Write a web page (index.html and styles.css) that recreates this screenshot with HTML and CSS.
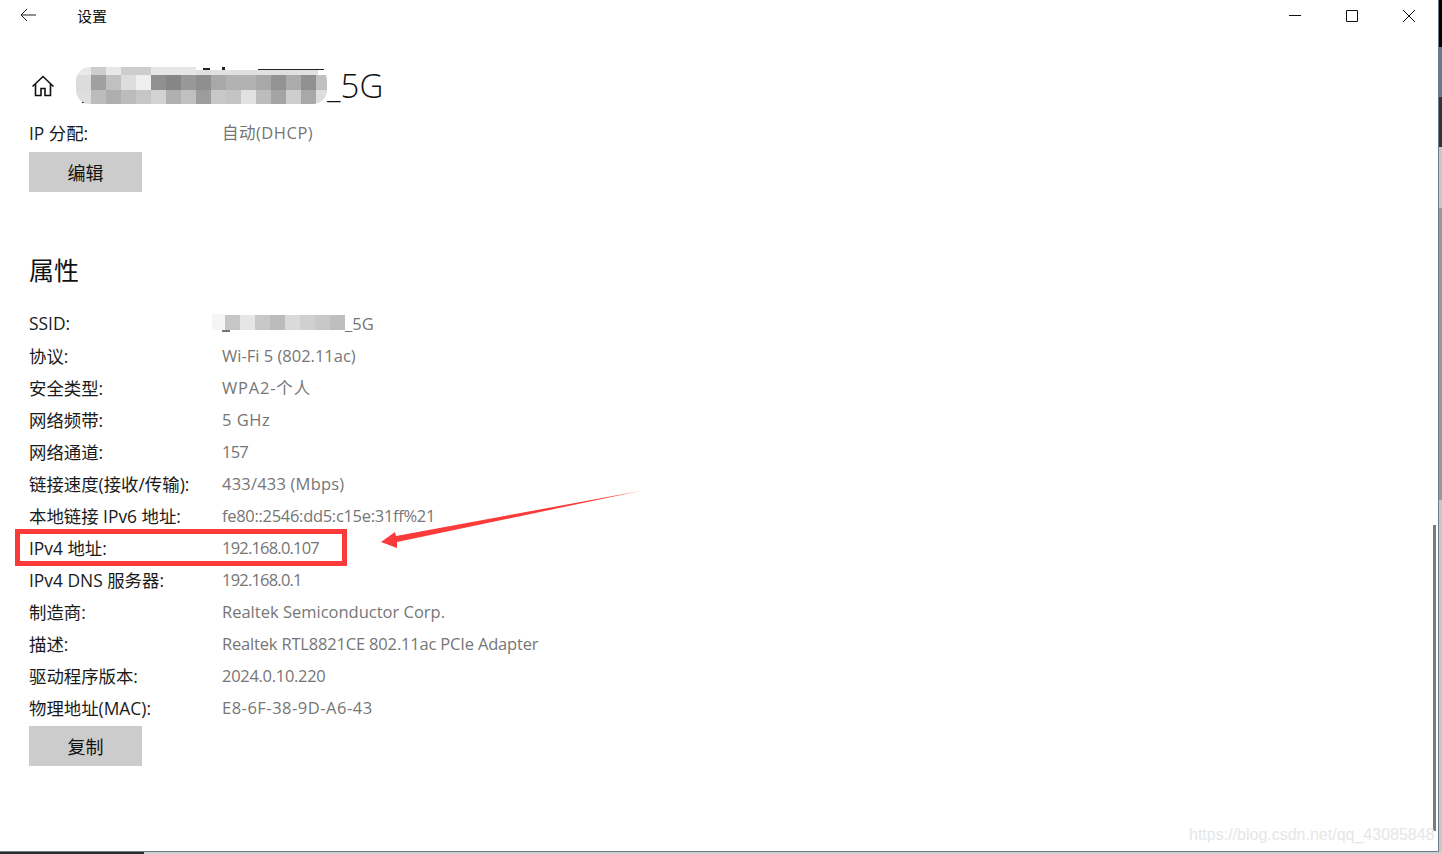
FILE: index.html
```html
<!DOCTYPE html>
<html lang="zh-CN">
<head>
    <meta charset="UTF-8">
    <meta name="viewport" content="width=device-width, initial-scale=1.0">
    <title>设置</title>
    <link rel="stylesheet" href="styles.css">
</head>
<body>
    <div class="desktop">
        <div class="window">
            <header class="titlebar">
                <div class="title-left">
                    <svg class="back-icon" width="16" height="14" viewBox="0 0 16 14"><path d="M7 1 1 7l6 6M1 7h15" fill="none" stroke="#222" stroke-width="1"/></svg>
                    <span class="app-name">设置</span>
                </div>
                <div class="controls">
                    <svg width="12" height="12" viewBox="0 0 12 12"><path d="M0 5.5h12" stroke="#111" stroke-width="1"/></svg>
                    <svg width="12" height="12" viewBox="0 0 12 12"><path d="M.5.5h11v11H.5z" fill="none" stroke="#111" stroke-width="1"/></svg>
                    <svg width="12" height="12" viewBox="0 0 12 12"><path d="M0 0l12 12M12 0 0 12" stroke="#111" stroke-width="1"/></svg>
                </div>
            </header>

            <div class="content">
                <div class="page-head">
                    <svg class="home-icon" width="24" height="24" viewBox="0 0 24 24"><path d="M1.500 12.500 12 2.500l10.500 10M4.500 10v11.500h5.500v-7h4v7h5.500V10" fill="none" stroke="#111" stroke-width="1.600"/></svg>
                    <h1 class="net-name">
                        <svg class="mosaic" width="251" height="38" viewBox="0 0 251 38">
                            <defs><clipPath id="blob"><rect x="0" y="0" width="251" height="37" rx="14"/></clipPath></defs>
                            <g fill="#222">
                                <rect x="127" y="1" width="7" height="2"/><rect x="146" y="0" width="3" height="3"/><rect x="182" y="2" width="66" height="1"/>
                                <rect x="6" y="33" width="16" height="3"/><rect x="40" y="35" width="10" height="2"/><rect x="90" y="35" width="12" height="2"/>
                            </g>
                            <g clip-path="url(#blob)">
                                <rect x="0" y="0" width="15" height="8" fill="#e9e9e9"/><rect x="15" y="0" width="15" height="8" fill="#cdcdcd"/><rect x="30" y="0" width="15" height="8" fill="#e8e8e8"/><rect x="45" y="0" width="30" height="8" fill="#cdcdcd"/><rect x="75" y="0" width="45" height="8" fill="#e6e6e6"/>
                                <rect x="0" y="8" width="15" height="15" fill="#dcdcdc"/><rect x="15" y="8" width="15" height="15" fill="#a0a0a0"/><rect x="30" y="8" width="15" height="15" fill="#c0c0c0"/><rect x="45" y="8" width="15" height="15" fill="#dddddd"/><rect x="60" y="8" width="15" height="15" fill="#efefef"/><rect x="75" y="8" width="15" height="15" fill="#909090"/><rect x="90" y="8" width="15" height="15" fill="#868686"/><rect x="105" y="8" width="15" height="15" fill="#989898"/><rect x="120" y="8" width="15" height="15" fill="#8f8f8f"/><rect x="135" y="8" width="15" height="15" fill="#a8a8a8"/><rect x="150" y="8" width="15" height="15" fill="#b2b2b2"/><rect x="165" y="8" width="15" height="15" fill="#b2b2b2"/><rect x="180" y="8" width="15" height="15" fill="#a8a8a8"/><rect x="195" y="8" width="15" height="15" fill="#939393"/><rect x="210" y="8" width="15" height="15" fill="#ababab"/><rect x="225" y="8" width="15" height="15" fill="#909090"/><rect x="240" y="8" width="11" height="15" fill="#c0c0c0"/>
                                <rect x="0" y="23" width="15" height="14" fill="#dedede"/><rect x="15" y="23" width="15" height="14" fill="#bcbcbc"/><rect x="30" y="23" width="15" height="14" fill="#aeaeae"/><rect x="45" y="23" width="15" height="14" fill="#bcbcbc"/><rect x="60" y="23" width="15" height="14" fill="#c6c6c6"/><rect x="75" y="23" width="15" height="14" fill="#d2d2d2"/><rect x="90" y="23" width="15" height="14" fill="#b0b0b0"/><rect x="105" y="23" width="15" height="14" fill="#c0c0c0"/><rect x="120" y="23" width="15" height="14" fill="#9c9c9c"/><rect x="135" y="23" width="15" height="14" fill="#c8c8c8"/><rect x="150" y="23" width="15" height="14" fill="#c4c4c4"/><rect x="165" y="23" width="15" height="14" fill="#e2e2e2"/><rect x="180" y="23" width="15" height="14" fill="#bcbcbc"/><rect x="195" y="23" width="15" height="14" fill="#a4a4a4"/><rect x="210" y="23" width="15" height="14" fill="#cecece"/><rect x="225" y="23" width="15" height="14" fill="#a8a8a8"/><rect x="240" y="23" width="11" height="14" fill="#dedede"/>
                            </g>
                            <rect x="120" y="3" width="122" height="5" fill="#e0e0e0"/>
                        </svg>
                        <span>_5G</span>
                    </h1>
                </div>

                <div class="row first-row"><span class="label">IP 分配:</span><span class="value wide">自动(DHCP)</span></div>
                <button class="btn btn-edit" type="button">编辑</button>

                <h2 class="section-title">属性</h2>

                <dl class="props">
                    <div class="row">
                        <dt class="label">SSID:</dt>
                        <dd class="value ssid">
                            <svg class="mosaic" width="133" height="20" viewBox="0 0 133 20">
                                <rect x="10" y="17" width="8" height="2" fill="#777"/>
                                <rect x="0" y="1" width="13" height="16" fill="#f5f5f5"/><rect x="13" y="2" width="15" height="15" fill="#c6c6c6"/><rect x="28" y="2" width="15" height="15" fill="#e6e6e6"/><rect x="43" y="2" width="15" height="15" fill="#c8c8c8"/><rect x="58" y="2" width="15" height="15" fill="#bcbcbc"/><rect x="73" y="2" width="15" height="15" fill="#dadada"/><rect x="88" y="2" width="15" height="15" fill="#d0d0d0"/><rect x="103" y="2" width="15" height="15" fill="#c8c8c8"/><rect x="118" y="2" width="15" height="15" fill="#bebebe"/>
                            </svg>
                            <span>_5G</span>
                        </dd>
                    </div>
                    <div class="row"><dt class="label">协议:</dt><dd class="value">Wi-Fi 5 (802.11ac)</dd></div>
                    <div class="row"><dt class="label">安全类型:</dt><dd class="value wider">WPA2-个人</dd></div>
                    <div class="row"><dt class="label">网络频带:</dt><dd class="value wide">5 GHz</dd></div>
                    <div class="row"><dt class="label">网络通道:</dt><dd class="value tighter">157</dd></div>
                    <div class="row"><dt class="label">链接速度(接收/传输):</dt><dd class="value wide-s">433/433 (Mbps)</dd></div>
                    <div class="row"><dt class="label">本地链接 IPv6 地址:</dt><dd class="value tight">fe80::2546:dd5:c15e:31ff%21</dd></div>
                    <div class="row"><dt class="label">IPv4 地址:</dt><dd class="value tighter">192.168.0.107</dd></div>
                    <div class="row"><dt class="label">IPv4 DNS 服务器:</dt><dd class="value tighter">192.168.0.1</dd></div>
                    <div class="row"><dt class="label">制造商:</dt><dd class="value">Realtek Semiconductor Corp.</dd></div>
                    <div class="row"><dt class="label">描述:</dt><dd class="value tight-s">Realtek RTL8821CE 802.11ac PCIe Adapter</dd></div>
                    <div class="row"><dt class="label">驱动程序版本:</dt><dd class="value tight">2024.0.10.220</dd></div>
                    <div class="row"><dt class="label">物理地址(MAC):</dt><dd class="value wide">E8-6F-38-9D-A6-43</dd></div>
                </dl>
                <button class="btn" type="button">复制</button>
            </div>

            <div class="scroll-thumb"></div>
        </div>
        <div class="taskbar-strip"><div class="taskbar-dark"></div></div>

        <!-- red markup drawn on top of the screenshot -->
        <div class="red-box"></div>
        <svg class="red-arrow" width="262" height="60" viewBox="0 0 262 60"><polygon points="1,51 15,41 16,45 260,0 17,51 17,57" fill="#fb3a3a"/></svg>
        <div class="watermark">https://blog.csdn.net/qq_43085848</div>
    </div>
</body>
</html>
```

FILE: styles.css
```css
html, body {
    margin: 0;
    height: 100%;
    overflow: hidden;
}
body {
    font-family: "Open Sans", "Noto Sans CJK SC", sans-serif;
    background: #cfcfcf;
    color: #111;
}
.desktop {
    position: relative;
    width: 1442px;
    height: 854px;
    display: flex;
    flex-direction: column;
    background: linear-gradient(#000 0 47px, #66788f 47px 97px, #333 97px 147px, #c8c8c8 147px 208px, #999 208px 500px, #c8c8c8 500px);
}
.window {
    position: relative;
    flex: 1;
    width: 1438px;
    background: #fff;
    border-right: 1px solid #6d7a90;
    border-bottom: 1px solid #6d7a90;
    overflow: hidden;
}
.titlebar {
    display: flex;
    justify-content: space-between;
    height: 32px;
    align-items: center;
}
.title-left {
    display: flex;
    align-items: center;
    padding-left: 20px;
    margin-bottom: 2px;
}
.app-name {
    font-size: 15px;
    margin-left: 41px;
}
.controls {
    display: flex;
    gap: 45px;
    padding-right: 23px;
}
.content {
    padding: 0 0 0 29px;
}
.page-head {
    display: flex;
    align-items: center;
    height: 44px;
    margin-top: 32px;
}
.home-icon {
    margin-left: 2px;
}
.net-name {
    display: flex;
    align-items: center;
    margin: 0 0 0 21px;
    font-size: 33px;
    font-weight: 300;
    line-height: 44px;
}
.mosaic {
    flex-shrink: 0;
}
.row {
    display: flex;
    height: 32px;
    align-items: center;
}
.first-row {
    margin-top: 8px;
}
.label {
    width: 193px;
    flex-shrink: 0;
    font-size: 17.4px;
    color: #1a1a1a;
}
.value {
    margin: 0;
    font-size: 16.5px;
    color: #767676;
}
.wider { letter-spacing: 0.8px; }
.wide { letter-spacing: 0.5px; }
.wide-s { letter-spacing: 0.2px; }
.tight { letter-spacing: -0.3px; }
.tight-s { letter-spacing: -0.18px; }
.tighter { letter-spacing: -0.8px; }
.ssid {
    display: flex;
    align-items: center;
    margin-left: -10px;
}
.btn {
    display: block;
    width: 113px;
    height: 40px;
    margin: 3px 0 0;
    padding: 0;
    border: 0;
    background: #cccccc;
    color: #111;
    font-family: inherit;
    font-size: 18px;
}
.btn-edit {
    margin-top: 4px;
}
.section-title {
    margin: 58px 0 0;
    font-size: 25px;
    font-weight: 400;
    line-height: 40px;
}
.props {
    margin: 17px 0 0;
}
.scroll-thumb {
    position: absolute;
    left: 1433px;
    top: 525px;
    width: 3px;
    height: 306px;
    background: #7b7b7b;
}
.taskbar-strip {
    height: 2px;
    background: #d0d0d0;
}
.taskbar-dark {
    width: 144px;
    height: 2px;
    background: #2b2b2b;
}
.red-box {
    position: absolute;
    left: 15px;
    top: 529px;
    width: 322px;
    height: 27px;
    border: 5px solid #fb3a3a;
}
.red-arrow {
    position: absolute;
    left: 380px;
    top: 491px;
}
.watermark {
    position: absolute;
    left: 1189px;
    top: 826px;
    font-family: "Liberation Sans", sans-serif;
    font-size: 16px;
    color: #e6e6e6;
}
```
